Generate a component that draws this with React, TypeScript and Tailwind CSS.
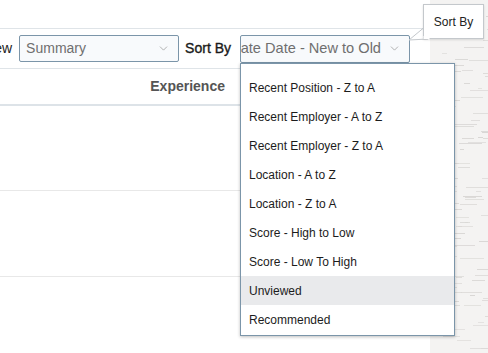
import { ChevronDown } from 'lucide-react';

const sortOptions = [
  'Recent Position - Z to A',
  'Recent Employer - A to Z',
  'Recent Employer - Z to A',
  'Location - A to Z',
  'Location - Z to A',
  'Score - High to Low',
  'Score - Low To High',
  'Unviewed',
  'Recommended',
];

// 오른쪽 회색 배경의 잔 무늬
function Texture() {
  const dashes: { x: number; y: number; w: number; o: number }[] = [];
  let seed = 7;
  const rand = () => {
    seed = (seed * 9301 + 49297) % 233280;
    return seed / 233280;
  };
  for (let y = 4; y < 353; y += 6) {
    const n = 1 + Math.floor(rand() * 3);
    for (let i = 0; i < n; i++) {
      dashes.push({ x: Math.floor(rand() * 58), y: y + Math.floor(rand() * 4), w: 4 + Math.floor(rand() * 22), o: 0.6 + rand() * 0.4 });
    }
  }
  return (
    <svg width="58" height="353" className="block">
      {dashes.map((d, i) => (
        <line key={i} x1={d.x} y1={d.y + 0.5} x2={d.x + d.w} y2={d.y + 0.5} stroke="#d9d7d5" strokeOpacity={d.o} strokeWidth="1" />
      ))}
    </svg>
  );
}

export default function App() {
  return (
    <div className="relative w-[488px] h-[353px] overflow-hidden flex font-['Liberation_Sans',Arial,sans-serif] text-[#222]">
      <main className="w-[430px] bg-white flex flex-col overflow-hidden">
        <div className="h-[28px] shrink-0" />
        {/* 툴바 */}
        <div className="h-[41px] shrink-0 border-t border-b border-[#dfe4e8] flex items-center">
          <span className="ml-[-18px] text-[14px] text-[#222]">View</span>
          <div className="ml-[7px] w-[160px] h-[27px] border border-[#7b95a9] bg-[#f8fafc] rounded-[2px] flex items-center justify-between pl-[6px] pr-[8px]">
            <span className="text-[14px] text-[#6f6f6f]">Summary</span>
            <ChevronDown size={13} strokeWidth={1.2} className="text-[#8a8a8a]" />
          </div>
          <span className="ml-[6px] text-[14px] text-[#1a1a1a] [-webkit-text-stroke:0.35px_#1a1a1a]">Sort By</span>
          <div className="ml-[9px] w-[170px] h-[28px] border border-[#7b95a9] bg-[#f8fafc] rounded-[2px] flex items-center pr-[8px]">
            <div className="flex-1 overflow-hidden flex justify-end pr-[7px]">
              <span className="text-[14.6px] text-[#6f6f6f] whitespace-nowrap">Update Date - New to Old</span>
            </div>
            <ChevronDown size={13} strokeWidth={1.2} className="text-[#8a8a8a]" />
          </div>
        </div>
        {/* 헤더 */}
        <div className="h-[37px] shrink-0 border-b-2 border-[#dde3e8] flex items-center justify-end pr-[205px]">
          <span className="text-[14px] font-bold text-[#555]">Experience</span>
        </div>
        <div className="h-[85px] shrink-0 border-b border-[#e8e8e8]" />
        <div className="h-[86px] shrink-0 border-b border-[#e8e8e8]" />
        <div className="flex-1" />
      </main>
      <aside className="flex-1 bg-[#f4f3f2]">
        <Texture />
      </aside>

      {/* 정렬 드롭다운 */}
      <div className="absolute left-[240px] top-[63px] w-[215px] h-[273px] bg-white border border-[#7b95a9] shadow-[0_1px_3px_rgba(0,0,0,0.25)] pt-[9px]">
        {sortOptions.map((opt) => (
          <div key={opt} className={`h-[29px] flex items-center pl-[8px] text-[12px] text-[#1c1c1c] ${opt === 'Unviewed' ? 'bg-[#e9eaec]' : ''}`}>
            {opt}
          </div>
        ))}
      </div>

      {/* 툴팁 */}
      <svg className="absolute left-[405px] top-[24px]" width="30" height="20">
        <polygon points="18.5,4 4,16 23,15" fill="white" />
        <polyline points="18.5,4 4,16 23,15" fill="none" stroke="#c4c8cc" strokeWidth="1" />
      </svg>
      <div className="absolute left-[423px] top-[4px] w-[61px] h-[35px] bg-white border border-[#c4c8cc] shadow-[0_1px_2px_rgba(0,0,0,0.12)] flex items-center justify-center text-[12px] text-[#222]">
        Sort By
      </div>
      <svg className="absolute left-[420px] top-[36px]" width="10" height="5">
        <rect x="3.5" y="0" width="6" height="3" fill="white" />
      </svg>
    </div>
  );
}
